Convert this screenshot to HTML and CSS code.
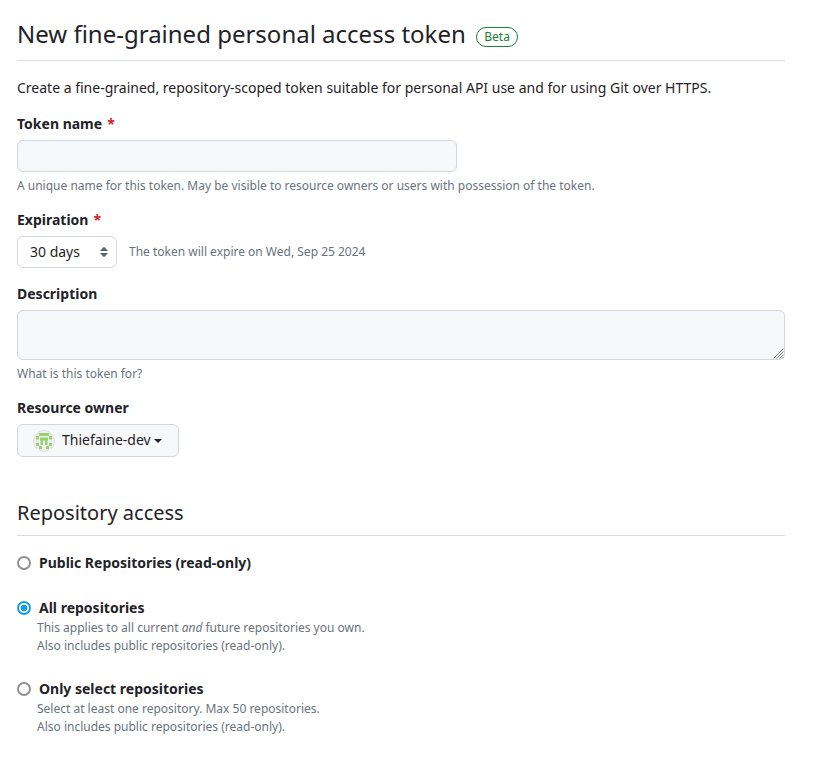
FILE: index.html
```html
<!DOCTYPE html>
<html lang="en">
<head>
<meta charset="utf-8">
<title>New fine-grained personal access token</title>
<link rel="stylesheet" href="styles.css">
</head>
<body>
<main class="page">
  <header class="head"><h1>New fine-grained personal access token</h1><span class="beta">Beta</span></header>
  <p class="intro">Create a fine-grained, repository-scoped token suitable for personal API use and for using Git over HTTPS.</p>
  <section class="group name">
    <label for="name">Token name <span class="req">*</span></label>
    <input id="name" class="input" type="text">
    <p class="note">A unique name for this token. May be visible to resource owners or users with possession of the token.</p>
  </section>
  <section class="group expiration">
    <label>Expiration <span class="req">*</span></label>
    <div class="row">
      <button class="select" type="button"><span>30 days</span>
        <svg width="10" height="12" viewBox="0 0 10 12"><path d="M5 .8 9 5H1zM5 11.2 1 7h8z" fill="#586069"/></svg>
      </button>
      <span class="note">The token will expire on Wed, Sep 25 2024</span>
    </div>
  </section>
  <section class="group description">
    <label for="desc">Description</label>
    <div class="area-wrap">
      <textarea id="desc" class="input area"></textarea>
      <svg class="grip" width="11" height="11" viewBox="0 0 11 11"><path d="M.5 10.5l10-10M3.5 10.5l7-7M6.5 10.5l4-4M9.5 10.5l1-1" stroke="#7b7b7b" stroke-width="1"/></svg>
    </div>
    <p class="note">What is this token for?</p>
  </section>
  <section class="group owner">
    <label>Resource owner</label>
    <button class="owner-btn" type="button">
      <svg class="avatar" width="22" height="22" viewBox="0 0 22 22"><circle cx="11" cy="11" r="10.5" fill="#f0f0f0" stroke="#dcdfe2"/><path fill="#99d070" d="M6 3h10v3H6zM3 6h3v3.500H3zM16 6h3v3.500h-3zM7 7.500h8v3H7zM7.500 10h2.500v5H7.500zM12 10h2.500v5H12zM3 13h3v3H3zM16 13h3v3h-3zM6 16h3v3H6zM13 16h3v3h-3z"/></svg>
      <span>Thiefaine-dev</span><i class="caret"></i>
    </button>
  </section>
  <h2>Repository access</h2>
  <div class="option first"><input type="radio" name="r" class="radio"><strong>Public Repositories (read-only)</strong></div>
  <div class="option"><input type="radio" name="r" class="radio" checked><strong>All repositories</strong>
    <p class="note">This applies to all current <em>and</em> future repositories you own.<br>Also includes public repositories (read-only).</p></div>
  <div class="option last"><input type="radio" name="r" class="radio"><strong>Only select repositories</strong>
    <p class="note">Select at least one repository. Max 50 repositories.<br>Also includes public repositories (read-only).</p></div>
</main>
</body>
</html>
```
FILE: styles.css
```css
* { box-sizing: border-box; }
body { margin: 0; background: #fff; color: #1f2328; font: 14px/21px "Noto Sans", sans-serif; }
.page { width: 768px; margin-left: 17px; padding-top: 16px; }
h1, h2, p { margin: 0; font-weight: 400; }
.head { display: flex; align-items: center; height: 45px; padding-bottom: 8px; border-bottom: 1px solid #d8dee4; }
h1 { font-size: 24px; line-height: 36px; }
.beta { margin: 5px 0 0 10px; padding: 0 7.5px; height: 20px; border: 1px solid #1a7f37; border-radius: 10px; color: #1a7f37; font-size: 12px; line-height: 18px; }
.intro { margin-top: 16px; }
.group { display: flex; flex-direction: column; align-items: flex-start; margin-top: 15px; }
.expiration, .owner { margin-top: 14px; }
label { font-weight: 700; margin-bottom: 6px; line-height: 21px; }
.req { color: #cf222e; margin-left: 1.5px; }
.input { width: 440px; height: 32px; border: 1px solid #d0d7de; border-radius: 6px; background: #f6f8fa; }
.note { color: #6a737d; font-size: 12px; line-height: 18px; }
.group p { margin-top: 5px; }
.row { display: flex; align-items: center; gap: 12px; }
.select { display: flex; align-items: center; justify-content: space-between; width: 100px; height: 32px; padding: 0 7px 0 12px; border: 1px solid #d0d7de; border-radius: 6px; background: #fff; color: inherit; font: inherit; }
.select span { padding-bottom: 2px; }
.area-wrap { position: relative; }
.area { display: block; width: 768px; height: 50px; resize: none; }
.grip { position: absolute; right: 1px; bottom: 1px; }
.owner-btn { display: flex; align-items: center; width: 162px; height: 33px; padding: 0 15px; border: 1px solid #d0d7de; border-radius: 6px; background: #f6f8fa; color: inherit; font: inherit; white-space: nowrap; }
.owner-btn span { padding-bottom: 2px; }
.avatar { flex: none; margin-right: 7px; }
.caret { margin-left: 3px; border: 4px solid transparent; border-top-color: currentColor; border-bottom: 0; }
h2 { margin-top: 41px; height: 38px; font-size: 20px; line-height: 30px; border-bottom: 1px solid #d8dee4; }
.option { margin-top: 24px; }
.option.first { margin-top: 16px; }
.option.last { margin-top: 23px; }
.option p { margin: 1px 0 0 20px; }
.radio { appearance: none; width: 14px; height: 14px; margin: 0 8px 0 0; border: 2px solid #8f8f9d; border-radius: 50%; vertical-align: -2px; background: #fff; }
.radio:checked { border-color: #1a9ddb; background: radial-gradient(circle, #1a9ddb 3px, #fff 3.7px); }
strong { font-weight: 700; }
```
